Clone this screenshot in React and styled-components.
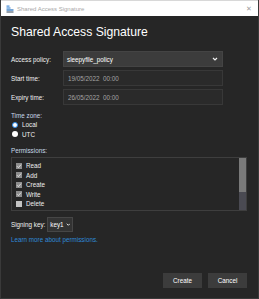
import React from "react";
import styled, { createGlobalStyle } from "styled-components";

const GlobalStyle = createGlobalStyle`
  html, body {
    margin: 0;
    padding: 0;
    background: #262626;
  }
  * {
    box-sizing: border-box;
  }
`;

const perms = [
  { name: "Read", checked: true },
  { name: "Add", checked: true },
  { name: "Create", checked: true },
  { name: "Write", checked: true },
  { name: "Delete", checked: false },
];

const AppIcon = () => (
  <svg width="8" height="8" viewBox="0 0 8 8">
    <rect x="0.5" y="0.5" width="3" height="1.2" fill="#4a90d9" />
    <rect x="0.5" y="2.4" width="4" height="1.2" fill="#4a90d9" />
    <rect x="0.5" y="4.3" width="7" height="1.4" fill="#3b7fc4" />
    <rect x="0.5" y="6.3" width="7" height="1.4" fill="#6b7a89" />
  </svg>
);

const Chevron = ({ size = 6 }) => (
  <svg width={size} height={size} viewBox="0 0 6 6">
    <path d="M1 2 L3 4 L5 2" fill="none" stroke="#f0f0f0" strokeWidth="1.2" />
  </svg>
);

const Check = () => (
  <svg width="6" height="6" viewBox="0 0 6 6">
    <path d="M1 3.2 L2.4 4.6 L5 1.6" fill="none" stroke="#e6e6e6" strokeWidth="0.9" />
  </svg>
);

const App = () => {
  return (
    <>
      <GlobalStyle />
      <Window>
        <TitleBar>
          <TitleLeft>
            <AppIcon />
            <TitleText>Shared Access Signature</TitleText>
          </TitleLeft>
          <Close>✕</Close>
        </TitleBar>
        <Content>
          <Heading>Shared Access Signature</Heading>
          <FormGrid>
            <Label>Access policy:</Label>
            <Select>
              <span>sleepyfile_policy</span>
              <Chevron />
            </Select>
            <Label>Start time:</Label>
            <Input>19/05/2022&nbsp;&nbsp;00:00</Input>
            <Label>Expiry time:</Label>
            <Input>26/05/2022&nbsp;&nbsp;00:00</Input>
          </FormGrid>

          <SectionLabel>Time zone:</SectionLabel>
          <RadioRow>
            <Radio selected />
            <span>Local</span>
          </RadioRow>
          <RadioRow>
            <Radio />
            <span>UTC</span>
          </RadioRow>

          <SectionLabel $top={7}>Permissions:</SectionLabel>
          <ListBox>
            <List>
              {perms.map((p) => (
                <ListItem key={p.name}>
                  <CheckBox checked={p.checked}>{p.checked && <Check />}</CheckBox>
                  <span>{p.name}</span>
                </ListItem>
              ))}
            </List>
            <ScrollBar>
              <Thumb />
            </ScrollBar>
          </ListBox>

          <KeyRow>
            <Label>Signing key:</Label>
            <KeySelect>
              <span>key1</span>
              <Chevron size={5} />
            </KeySelect>
          </KeyRow>
          <Link>Learn more about permissions.</Link>

          <Buttons>
            <Button>Create</Button>
            <Button>Cancel</Button>
          </Buttons>
        </Content>
      </Window>
    </>
  );
};

export default App;

const Window = styled.div`
  width: 259px;
  height: 299px;
  background: #262626;
  border: 1px solid #3a3a3a;
  border-top: none;
  display: flex;
  flex-direction: column;
  font-family: "Liberation Sans", Arial, sans-serif;
  color: #f0f0f0;
  overflow: hidden;
`;

const TitleBar = styled.div`
  height: 16px;
  background: #ffffff;
  border-top: 1px solid #d8d8d8;
  display: flex;
  align-items: center;
  justify-content: space-between;
  padding: 0 6px 0 5px;
`;

const TitleLeft = styled.div`
  display: flex;
  align-items: center;
  gap: 3px;
`;

const TitleText = styled.span`
  font-size: 6px;
  color: #a8a8a8;
`;

const Close = styled.span`
  font-size: 7px;
  color: #a0a0a0;
`;

const Content = styled.div`
  flex: 1;
  display: flex;
  flex-direction: column;
  padding: 9px 11px 10px 10px;
`;

const Heading = styled.h1`
  margin: 0;
  font-size: 12.2px;
  font-weight: normal;
  line-height: 14px;
  color: #ffffff;
`;

const FormGrid = styled.div`
  margin-top: 12px;
  display: grid;
  grid-template-columns: 52px 160px;
  grid-auto-rows: 16px;
  row-gap: 3px;
  align-items: center;
`;

const Label = styled.span`
  font-size: 6.3px;
  color: #f0f0f0;
`;

const Select = styled.div`
  height: 16px;
  background: #3c3c3c;
  border: 1px solid #444;
  display: flex;
  align-items: center;
  justify-content: space-between;
  padding: 0 4px 0 3px;
  font-size: 6.3px;
  color: #ffffff;
`;

const Input = styled.div`
  height: 16px;
  background: #2a2a2a;
  border: 1px solid #383838;
  display: flex;
  align-items: center;
  padding: 0 4px;
  font-size: 6.3px;
  color: #a4a4a4;
`;

const SectionLabel = styled.div`
  margin-top: ${({ $top }) => ($top ? $top : 6)}px;
  font-size: 6.3px;
  line-height: 9px;
  color: #c8d8e8;
`;

const RadioRow = styled.div`
  display: flex;
  align-items: center;
  gap: 4px;
  height: 9.5px;
  padding-left: 1px;
  font-size: 6.3px;
`;

const Radio = styled.span`
  width: 6px;
  height: 6px;
  border-radius: 50%;
  background: #ffffff;
  border: ${({ selected }) => (selected ? "1.6px solid #2a8ae8" : "none")};
`;

const ListBox = styled.div`
  margin-top: 2px;
  height: 54px;
  border: 1px solid #3e3e3e;
  display: flex;
  justify-content: space-between;
`;

const List = styled.div`
  padding: 3px 0 0 4px;
`;

const ListItem = styled.div`
  height: 9.5px;
  display: flex;
  align-items: center;
  gap: 4px;
  font-size: 6.3px;
  color: #f0f0f0;
`;

const CheckBox = styled.span`
  width: 6px;
  height: 6px;
  background: ${({ checked }) => (checked ? "#8e8e8e" : "#c4c4c4")};
  display: flex;
  align-items: center;
  justify-content: center;
`;

const ScrollBar = styled.div`
  width: 7px;
  background: #4a4a52;
  display: flex;
  flex-direction: column;
`;

const Thumb = styled.div`
  height: 34px;
  background: #7a7a7a;
`;

const KeyRow = styled.div`
  margin-top: 6px;
  display: flex;
  align-items: center;
  gap: 2px;
`;

const KeySelect = styled.div`
  height: 15px;
  width: 26px;
  background: #333333;
  border: 1px solid #464646;
  display: flex;
  align-items: center;
  gap: 2px;
  padding: 0 2px;
  font-size: 6.3px;
  color: #ffffff;
`;

const Link = styled.a`
  margin-top: 3px;
  font-size: 6.3px;
  line-height: 9px;
  color: #2f8ad8;
  cursor: pointer;
`;

const Buttons = styled.div`
  margin-top: auto;
  display: flex;
  justify-content: flex-end;
  gap: 6px;
`;

const Button = styled.button`
  width: 39px;
  height: 15px;
  background: #3c3c3c;
  border: none;
  font-family: "Liberation Sans", Arial, sans-serif;
  font-size: 6.3px;
  color: #ffffff;
  padding: 0;
`;
